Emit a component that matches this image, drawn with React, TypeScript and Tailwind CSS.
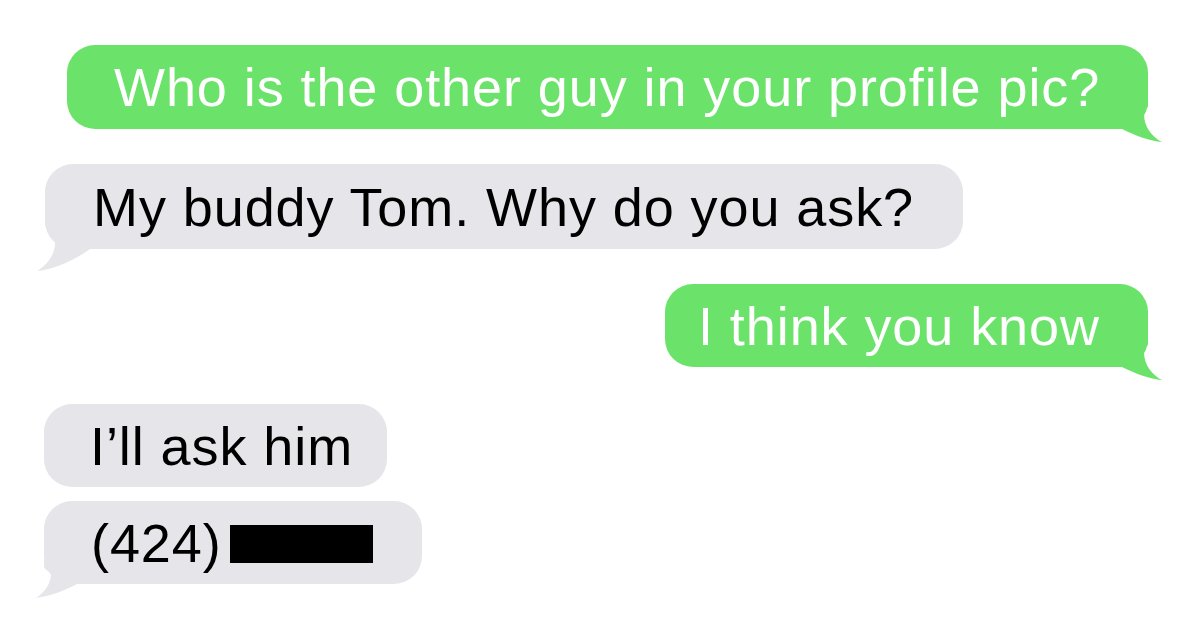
import React from "react";

const GREEN = "#6be26a";

function RightTail() {
  return (
    <svg
      className="absolute right-[-16px] bottom-[-14px]"
      width="50"
      height="44"
      viewBox="0 0 50 44"
    >
      <path
        d="M0 0 L34 0 L34 6 C34 10 30 11 30 15 C30 28 38 38 48 43 C36 42 22 37 8 30 L0 30 L0 0 Z"
        fill={GREEN}
      />
    </svg>
  );
}

function LeftTailBig() {
  return (
    <svg
      className="absolute left-[-10px] bottom-[-24px]"
      width="60"
      height="50"
      viewBox="0 0 60 50"
    >
      <path
        d="M60 0 L10 0 C10 8 18 12 20 20 C20 32 12 42 2 48 C20 46 38 38 55 26 L60 26 L60 0 Z"
        fill="#e5e5ea"
      />
    </svg>
  );
}

function LeftTailSmall() {
  return (
    <svg
      className="absolute left-[-10px] bottom-[-16px]"
      width="50"
      height="40"
      viewBox="0 0 50 40"
    >
      <path
        d="M50 0 L10 0 L10 6 C10 10 16 11 17 14 C17 24 10 33 2 38 C16 36 30 31 43 24 L50 24 L50 0 Z"
        fill="#e5e5ea"
      />
    </svg>
  );
}

export default function App() {
  return (
    <div
      className="w-[1200px] h-[630px] bg-white overflow-hidden flex flex-col text-[54px] leading-none tracking-[0.92px]"
      style={{ fontFamily: '"Liberation Sans", Arial, sans-serif' }}
    >
      <div className="flex justify-end pr-[52px] mt-[45px]">
        <div className="relative w-[1081px] h-[84px] rounded-[28px] bg-[#6be26a] flex items-center pl-[47px] text-white whitespace-nowrap">
          <RightTail />
          <span className="relative">Who is the other guy in your profile pic?</span>
        </div>
      </div>

      <div className="flex justify-start pl-[45px] mt-[35px]">
        <div className="relative w-[918px] h-[85px] rounded-[28px] bg-[#e5e5ea] flex items-center pl-[48px] text-black whitespace-nowrap">
          <LeftTailBig />
          <span className="relative">My buddy Tom. Why do you ask?</span>
        </div>
      </div>

      <div className="flex justify-end pr-[52px] mt-[35px]">
        <div className="relative w-[483px] h-[83px] rounded-[28px] bg-[#6be26a] flex items-center pl-[33px] text-white whitespace-nowrap">
          <RightTail />
          <span className="relative">I think you know</span>
        </div>
      </div>

      <div className="flex justify-start pl-[44px] mt-[37px]">
        <div className="relative w-[343px] h-[83px] rounded-[28px] bg-[#e5e5ea] flex items-center pl-[46px] text-black whitespace-nowrap">
          <span className="relative">I’ll ask him</span>
        </div>
      </div>

      <div className="flex justify-start pl-[44px] mt-[14px]">
        <div className="relative w-[378px] h-[83px] rounded-[28px] bg-[#e5e5ea] flex items-center pl-[47px] text-black whitespace-nowrap">
          <LeftTailSmall />
          <span className="relative">(424)</span>
          <span className="relative ml-[8px] w-[143px] h-[38px] bg-black mt-[2px]" />
        </div>
      </div>
    </div>
  );
}
